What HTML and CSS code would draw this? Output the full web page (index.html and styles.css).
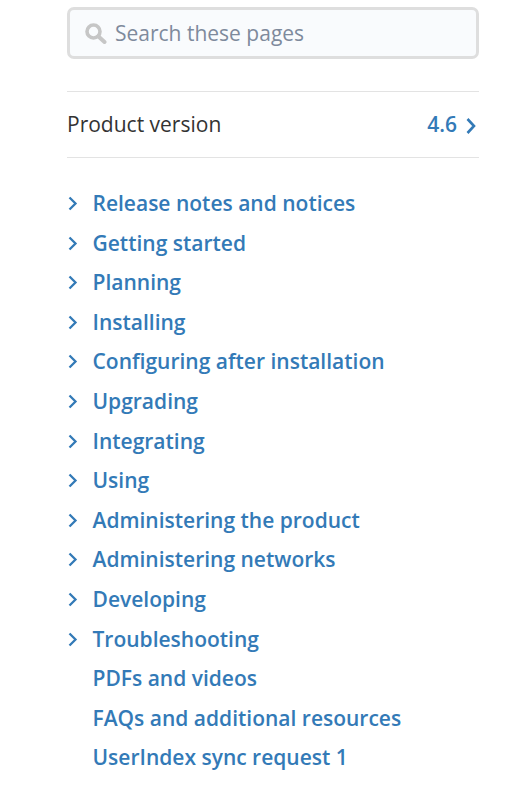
FILE: index.html
```html
<!DOCTYPE html>
<html lang="en">
<head>
<meta charset="utf-8">
<title>Docs navigation</title>
<link rel="stylesheet" href="styles.css">
</head>
<body>
<aside class="sidebar">
  <div class="search">
    <svg class="search-icon" width="22" height="21" viewBox="0 0 22 21"><circle cx="8.5" cy="8.5" r="6.5" fill="none" stroke="#c6c6c6" stroke-width="3.6"/><path d="M13.5 13.5l6 5.5" stroke="#c6c6c6" stroke-width="4" stroke-linecap="round"/></svg>
    <span class="search-text">Search these pages</span>
  </div>
  <div class="version">
    <span class="version-label">Product version</span>
    <span class="version-value">4.6
      <svg class="ver-chev" width="14" height="18" viewBox="0 0 14 18"><path d="M2.5 2l6.5 7-6.5 7" fill="none" stroke="#337ab7" stroke-width="2.6"/></svg>
    </span>
  </div>
  <ul class="nav">
    <li class="item"><svg class="chev" width="12" height="15" viewBox="0 0 12 15"><path d="M2.5 1.5l6 6-6 6" fill="none" stroke="#337ab7" stroke-width="2.3"/></svg><a>Release notes and notices</a></li>
    <li class="item"><svg class="chev" width="12" height="15" viewBox="0 0 12 15"><path d="M2.5 1.5l6 6-6 6" fill="none" stroke="#337ab7" stroke-width="2.3"/></svg><a>Getting started</a></li>
    <li class="item"><svg class="chev" width="12" height="15" viewBox="0 0 12 15"><path d="M2.5 1.5l6 6-6 6" fill="none" stroke="#337ab7" stroke-width="2.3"/></svg><a>Planning</a></li>
    <li class="item"><svg class="chev" width="12" height="15" viewBox="0 0 12 15"><path d="M2.5 1.5l6 6-6 6" fill="none" stroke="#337ab7" stroke-width="2.3"/></svg><a>Installing</a></li>
    <li class="item"><svg class="chev" width="12" height="15" viewBox="0 0 12 15"><path d="M2.5 1.5l6 6-6 6" fill="none" stroke="#337ab7" stroke-width="2.3"/></svg><a>Configuring after installation</a></li>
    <li class="item"><svg class="chev" width="12" height="15" viewBox="0 0 12 15"><path d="M2.5 1.5l6 6-6 6" fill="none" stroke="#337ab7" stroke-width="2.3"/></svg><a>Upgrading</a></li>
    <li class="item"><svg class="chev" width="12" height="15" viewBox="0 0 12 15"><path d="M2.5 1.5l6 6-6 6" fill="none" stroke="#337ab7" stroke-width="2.3"/></svg><a>Integrating</a></li>
    <li class="item"><svg class="chev" width="12" height="15" viewBox="0 0 12 15"><path d="M2.5 1.5l6 6-6 6" fill="none" stroke="#337ab7" stroke-width="2.3"/></svg><a>Using</a></li>
    <li class="item"><svg class="chev" width="12" height="15" viewBox="0 0 12 15"><path d="M2.5 1.5l6 6-6 6" fill="none" stroke="#337ab7" stroke-width="2.3"/></svg><a>Administering the product</a></li>
    <li class="item"><svg class="chev" width="12" height="15" viewBox="0 0 12 15"><path d="M2.5 1.5l6 6-6 6" fill="none" stroke="#337ab7" stroke-width="2.3"/></svg><a>Administering networks</a></li>
    <li class="item"><svg class="chev" width="12" height="15" viewBox="0 0 12 15"><path d="M2.5 1.5l6 6-6 6" fill="none" stroke="#337ab7" stroke-width="2.3"/></svg><a>Developing</a></li>
    <li class="item"><svg class="chev" width="12" height="15" viewBox="0 0 12 15"><path d="M2.5 1.5l6 6-6 6" fill="none" stroke="#337ab7" stroke-width="2.3"/></svg><a>Troubleshooting</a></li>
    <li class="item plain"><a>PDFs and videos</a></li>
    <li class="item plain"><a>FAQs and additional resources</a></li>
    <li class="item plain"><a>UserIndex sync request 1</a></li>
  </ul>
</aside>
</body>
</html>
```
FILE: styles.css
```css
html, body { margin: 0; padding: 0; background: #fff; }
body { font-family: "Open Sans", sans-serif; height: 798px; overflow: hidden; }
.sidebar { width: 412px; margin-left: 67px; padding-top: 7px; }
.search { box-sizing: border-box; height: 52px; border: 3px solid #dedede; border-radius: 7px; background: #f9fbfd; display: flex; align-items: center; padding-left: 15px; }
.search-icon { margin-right: 8px; }
.search-text { font-size: 21px; color: #7e8a9c; }
.version { margin-top: 32px; height: 67px; box-sizing: border-box; padding-bottom: 1px; border-top: 1px solid #e3e3e3; border-bottom: 1px solid #e3e3e3; display: flex; align-items: center; justify-content: space-between; }
.version-label { font-size: 21px; color: #333; }
.version-value { font-size: 21px; font-weight: 600; color: #337ab7; display: flex; align-items: center; gap: 8px; }
.ver-chev { margin-top: 4px; }
.nav { list-style: none; margin: 25.2px 0 0; padding: 0; }
.item { display: flex; align-items: center; height: 39.6px; font-size: 21px; font-weight: 600; color: #337ab7; }
.chev { margin-right: 13.5px; margin-top: 1px; flex: none; }
.plain { padding-left: 25.5px; }
```
